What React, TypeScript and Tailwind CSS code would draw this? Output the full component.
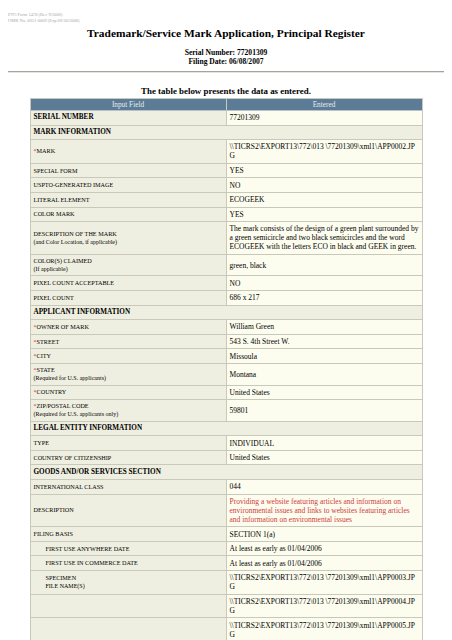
import React from "react";

type Row =
  | { kind: "section"; text: string }
  | {
      kind: "field";
      label: string;
      note?: string;
      req?: boolean;
      indent?: boolean;
      bold?: boolean;
      path?: boolean;
      value: string;
      red?: boolean;
    };

const rows: Row[] = [
  { kind: "field", label: "SERIAL NUMBER", value: "77201309", bold: true },
  { kind: "section", text: "MARK INFORMATION" },
  { kind: "field", label: "MARK", req: true, path: true, value: "\\\\TICRS2\\EXPORT13\\772\\013 \\77201309\\xml1\\APP0002.JPG" },
  { kind: "field", label: "SPECIAL FORM", value: "YES" },
  { kind: "field", label: "USPTO-GENERATED IMAGE", value: "NO" },
  { kind: "field", label: "LITERAL ELEMENT", value: "ECOGEEK" },
  { kind: "field", label: "COLOR MARK", value: "YES" },
  {
    kind: "field",
    label: "DESCRIPTION OF THE MARK",
    note: "(and Color Location, if applicable)",
    value:
      "The mark consists of the design of a green plant surrounded by a green semicircle and two black semicircles and the word ECOGEEK with the letters ECO in black and GEEK in green.",
  },
  { kind: "field", label: "COLOR(S) CLAIMED", note: "(If applicable)", value: "green, black" },
  { kind: "field", label: "PIXEL COUNT ACCEPTABLE", value: "NO" },
  { kind: "field", label: "PIXEL COUNT", value: "686 x 217" },
  { kind: "section", text: "APPLICANT INFORMATION" },
  { kind: "field", label: "OWNER OF MARK", req: true, value: "William Green" },
  { kind: "field", label: "STREET", req: true, value: "543 S. 4th Street W." },
  { kind: "field", label: "CITY", req: true, value: "Missoula" },
  { kind: "field", label: "STATE", req: true, note: "(Required for U.S. applicants)", value: "Montana" },
  { kind: "field", label: "COUNTRY", req: true, value: "United States" },
  { kind: "field", label: "ZIP/POSTAL CODE", req: true, note: "(Required for U.S. applicants only)", value: "59801" },
  { kind: "section", text: "LEGAL ENTITY INFORMATION" },
  { kind: "field", label: "TYPE", value: "INDIVIDUAL" },
  { kind: "field", label: "COUNTRY OF CITIZENSHIP", value: "United States" },
  { kind: "section", text: "GOODS AND/OR SERVICES SECTION" },
  { kind: "field", label: "INTERNATIONAL CLASS", value: "044" },
  {
    kind: "field",
    label: "DESCRIPTION",
    red: true,
    value:
      "Providing a website featuring articles and information on environmental issues and links to websites featuring articles and information on environmental issues",
  },
  { kind: "field", label: "FILING BASIS", value: "SECTION 1(a)" },
  { kind: "field", label: "FIRST USE ANYWHERE DATE", indent: true, value: "At least as early as 01/04/2006" },
  { kind: "field", label: "FIRST USE IN COMMERCE DATE", indent: true, value: "At least as early as 01/04/2006" },
  {
    kind: "field",
    label: "SPECIMEN",
    note: "FILE NAME(S)",
    indent: true,
    path: true,
    value: "\\\\TICRS2\\EXPORT13\\772\\013 \\77201309\\xml1\\APP0003.JPG",
  },
  { kind: "field", label: "", indent: true, path: true, value: "\\\\TICRS2\\EXPORT13\\772\\013 \\77201309\\xml1\\APP0004.JPG" },
  { kind: "field", label: "", indent: true, path: true, value: "\\\\TICRS2\\EXPORT13\\772\\013 \\77201309\\xml1\\APP0005.JPG" },
];

export default function App() {
  return (
    <div className="bg-white text-black font-['Liberation_Serif','Times_New_Roman',serif] pt-[12px] px-[8px] pb-[20px] w-[452px]">
      <div className="text-[4.5px] leading-[6px] text-[#a8a8a8]">
        <div>PTO Form 1478 (Rev 9/2006)</div>
        <div>OMB No. 0651-0009 (Exp 09/30/2008)</div>
      </div>
      <h1 className="text-center font-bold text-[11.4px] leading-[17px] mt-[1px]">
        Trademark/Service Mark Application, Principal Register
      </h1>
      <div className="text-center font-bold text-[7.6px] leading-[9px] mt-[6px]">
        <div>Serial Number: 77201309</div>
        <div>Filing Date: 06/08/2007</div>
      </div>
      <div className="mt-[5px] border-t border-[#a4a49c] border-b border-b-[#e4e4e0]" />
      <div className="text-center font-bold text-[8.9px] leading-[12px] mt-[12px]">
        The table below presents the data as entered.
      </div>
      <table className="mx-auto w-[392px] border-collapse table-fixed mt-[1px] border border-[#c9c9bb]">
        <colgroup>
          <col className="w-[196px]" />
          <col className="w-[196px]" />
        </colgroup>
        <thead>
          <tr className="bg-[#5b7b96]">
            <th className="font-normal text-[7.3px] leading-[8px] text-[#e6ecf0] py-[1.5px] border border-[#c9c9bb] border-b-[#b8c2c8]">
              Input Field
            </th>
            <th className="font-normal text-[7.3px] leading-[8px] text-[#e6ecf0] py-[1.5px] border border-[#c9c9bb] border-b-[#b8c2c8]">
              Entered
            </th>
          </tr>
        </thead>
        <tbody>
          {rows.map((r, i) => {
            if (r.kind === "section") {
              return (
                <tr key={i}>
                  <td
                    colSpan={2}
                    className="bg-[#efefe1] border border-[#c9c9bb] px-[3px] py-[2.3px] font-bold text-[7.2px] leading-[9px]"
                  >
                    {r.text}
                  </td>
                </tr>
              );
            }
            return (
              <tr key={i}>
                <td
                  className={
                    "bg-[#efefe1] border border-[#c9c9bb] py-[2.3px] align-middle " +
                    (r.indent ? "pl-[15px] pr-[3px]" : "px-[3px]")
                  }
                >
                  {r.bold ? (
                    <div className="font-bold text-[7.2px] leading-[9px]">{r.label}</div>
                  ) : (
                    <>
                      <div className="text-[6.2px] leading-[8px]">
                        {r.req && <span className="text-[#d03a3a]">*</span>}
                        {r.label}
                      </div>
                      {r.note && <div className="text-[6px] leading-[8px]">{r.note}</div>}
                    </>
                  )}
                </td>
                <td
                  className={
                    "bg-[#fdfdef] border border-[#c9c9bb] px-[3px] py-[2.3px] text-[7.5px] leading-[9px] align-middle " +
                    (r.path ? "break-all " : "") +
                    (r.red ? "text-[#d03a3a]" : "")
                  }
                >
                  {r.value}
                </td>
              </tr>
            );
          })}
        </tbody>
      </table>
    </div>
  );
}
